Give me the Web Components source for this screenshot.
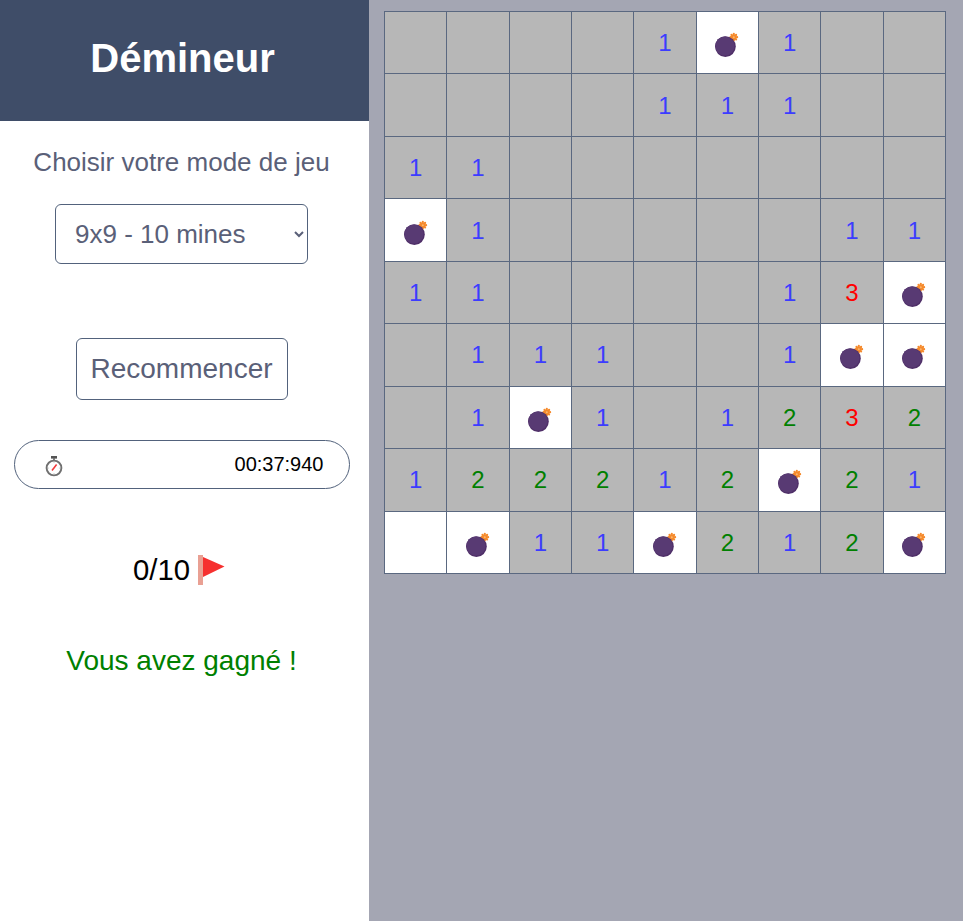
<!DOCTYPE html>
<html lang="fr">
<head>
<meta charset="utf-8">
<title>Démineur</title>
<style>
html,body{margin:0;padding:0;height:100%;}
body{font-family:"Liberation Sans",Arial,sans-serif;}
</style>
</head>
<body>
<ms-app>
  <ms-sidebar slot="side">
    <ms-title>Démineur</ms-title>
    <ms-mode></ms-mode>
    <ms-restart>Recommencer</ms-restart>
    <ms-timer>00:37:940</ms-timer>
    <ms-flags>0/10</ms-flags>
    <ms-status>Vous avez gagné !</ms-status>
  </ms-sidebar>
  <ms-board slot="main" data-rows="....1B1..|....111..|11.......|B1.....11|11....13B|.111..1BB|.1B1.1232|122212B21|WB11B212B"></ms-board>
</ms-app>
<script>
function def(name, css, html, init){
  customElements.define(name, class extends HTMLElement{
    constructor(){super();const r=this.attachShadow({mode:'open'});r.innerHTML='<style>'+css+'</style>'+html;}
    connectedCallback(){if(init)init.call(this);}
  });
}
const BOMB='<svg viewBox="0 0 26 26" width="26" height="26" aria-hidden="true">'+
  '<g fill="#f58a2c"><circle cx="19.8" cy="5.2" r="3"/><circle cx="19.8" cy="1.9" r="1.1"/><circle cx="19.8" cy="8.5" r="1.1"/><circle cx="16.5" cy="5.2" r="1.1"/><circle cx="23.1" cy="5.2" r="1.1"/><circle cx="17.5" cy="2.9" r="1.1"/><circle cx="22.1" cy="2.9" r="1.1"/><circle cx="17.5" cy="7.5" r="1.1"/><circle cx="22.1" cy="7.5" r="1.1"/></g>'+
  '<circle cx="19.8" cy="5.2" r="1" fill="#fbb56e"/>'+
  '<path d="M15.8 8.7l1.7-1.7 1.5 1.5-1.7 1.7z" fill="#6d4a86"/>'+
  '<circle cx="11.4" cy="14.6" r="10.4" fill="#4f2f68"/>'+
  '<circle cx="10.9" cy="14" r="9.6" fill="#583a73"/></svg>';

def('ms-app',
  ':host{display:grid;grid-template-columns:369px 1fr;height:921px;background:#a4a6b3;overflow:hidden}',
  '<slot name="side"></slot><slot name="main"></slot>');

def('ms-sidebar',
  ':host{display:flex;flex-direction:column;align-items:center;box-sizing:border-box;background:#fff;height:921px;padding-right:6px}',
  '<slot></slot>');

def('ms-title',
  ':host{display:block;align-self:stretch;box-sizing:border-box;height:121px;margin-right:-6px;padding-right:4px;background:#3f4d68;color:#fff;font:700 40px/116px "Liberation Sans",sans-serif;text-align:center}',
  '<slot></slot>');

def('ms-mode',
  ':host{display:flex;flex-direction:column;align-items:center;padding-top:26px}'+
  'label{font:26px/30px "Liberation Sans",sans-serif;color:#5a6078}'+
  'select{box-sizing:border-box;width:253px;height:60px;margin-top:27px;padding:0 15px;border:1px solid #52627c;border-radius:6px;background:#fff;color:#5a6078;font:26px "Liberation Sans",sans-serif;appearance:auto}',
  '<label for="m">Choisir votre mode de jeu</label><select id="m"><option>9x9 - 10 mines</option><option>16x16 - 40 mines</option><option>30x16 - 99 mines</option></select>');

def('ms-restart',
  ':host{display:block;margin-top:74px}'+
  'button{box-sizing:border-box;display:block;height:62px;width:212px;padding:0;border:1px solid #52627c;border-radius:6px;background:#fff;color:#5a6078;font:28px "Liberation Sans",sans-serif}',
  '<button><slot></slot></button>');

def('ms-timer',
  ':host{display:flex;align-items:center;justify-content:space-between;box-sizing:border-box;width:336px;height:49px;margin-top:40px;padding:0 25px 0 29px;border:1px solid #52627c;border-radius:25px;font:20px "Liberation Sans",sans-serif;color:#000}'+
  'svg{display:block;margin-top:2px}',
  '<svg viewBox="0 0 20 22" width="20" height="22" aria-hidden="true">'+
  '<rect x="7" y="1" width="6" height="2.6" fill="#555"/><rect x="9.2" y="3" width="1.6" height="2.4" fill="#666"/>'+
  '<circle cx="10" cy="13" r="7.4" fill="#fff" stroke="#707070" stroke-width="1.9"/>'+
  '<path d="M8 15.5L12.6 9.6" stroke="#f2383a" stroke-width="1.6" fill="none"/>'+
  '<g fill="#bbb"><circle cx="10" cy="7.6" r=".5"/><circle cx="10" cy="18.4" r=".5"/><circle cx="4.6" cy="13" r=".5"/><circle cx="15.4" cy="13" r=".5"/></g></svg>'+
  '<span><slot></slot></span>');

def('ms-flags',
  ':host{display:flex;align-items:center;gap:8px;margin:59px 5px 0 0;height:44px;font:29.3px "Liberation Sans",sans-serif;color:#000}'+
  'svg{display:block}',
  '<span><slot></slot></span><svg viewBox="0 0 27 30" width="27" height="30" aria-hidden="true">'+
  '<rect x="0" y="0" width="5" height="30" fill="#e9a093"/>'+
  '<path d="M5 2L26.5 11.5 5 22z" fill="#f6302f"/></svg>');

def('ms-status',
  ':host{display:block;margin-top:53px;font:28px/32px "Liberation Sans",sans-serif;color:#008000;text-align:center}',
  '<slot></slot>');

def('ms-bomb',':host{display:block;width:26px;height:26px;margin:5px 0 0 0}',BOMB);

def('ms-cell',
  ':host{display:flex;align-items:center;justify-content:center;box-sizing:border-box;min-width:0;min-height:0;background:#b7b7b7;border-right:1px solid #5a6880;border-bottom:1px solid #5a6880;font:24px "Liberation Sans",sans-serif}'+
  ':host([open]){background:#fff}'+
  ':host([n]){padding-top:1px}'+
  ':host([n="1"]){color:#3c3cff}:host([n="2"]){color:#008000}:host([n="3"]){color:#ff0000}',
  '<slot></slot>');

def('ms-board',
  ':host{display:block;padding:11px 17px 0 15px}'+
  '#g{display:grid;box-sizing:border-box;width:562px;height:563px;grid-template-columns:repeat(9,1fr);grid-template-rows:repeat(9,1fr);border-top:1px solid #5a6880;border-left:1px solid #5a6880}',
  '<div id="g"></div>',
  function(){
    const g=this.shadowRoot.getElementById('g');
    if(g.children.length)return;
    this.dataset.rows.split('|').forEach(row=>{
      [...row].forEach(c=>{
        const cell=document.createElement('ms-cell');
        if(c==='B'){cell.setAttribute('open','');cell.appendChild(document.createElement('ms-bomb'));}
        else if(c==='W'){cell.setAttribute('open','');}
        else if(c!=='.'){cell.setAttribute('n',c);cell.textContent=c;}
        g.appendChild(cell);
      });
    });
  });
</script>
</body>
</html>
